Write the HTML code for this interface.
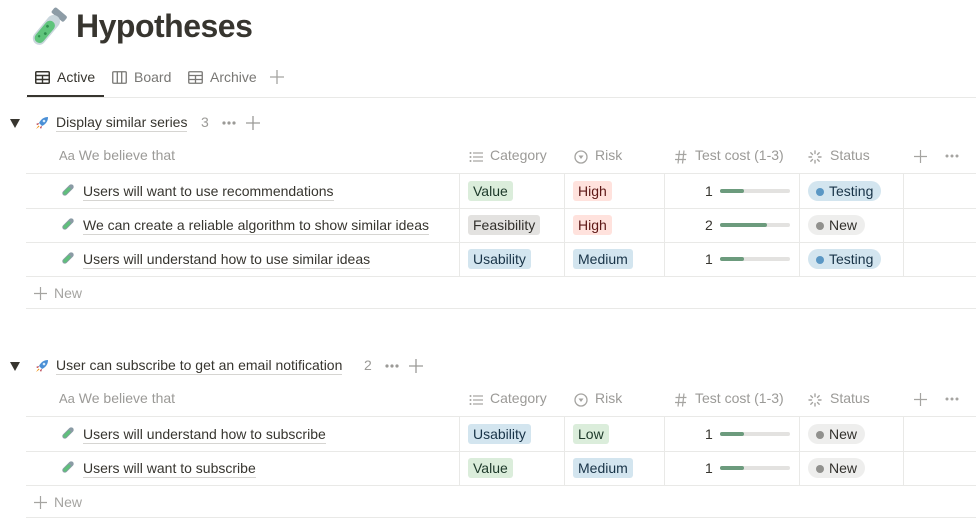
<!DOCTYPE html>
<html><head><meta charset="utf-8"><style>
*{margin:0;padding:0;box-sizing:border-box}
body{width:976px;height:519px;background:#fff;font-family:"Liberation Sans",sans-serif;color:#37352f;position:relative;overflow:hidden}
.a{position:absolute;white-space:nowrap}
.h1{left:76px;top:8px;font-size:32px;font-weight:bold;color:#37352f;letter-spacing:-0.5px}
.tab{top:69px;font-size:14px;color:#787774}
.sec{position:absolute;left:0;width:976px;height:180px}
.gh{top:8px;font-size:14px;color:#37352f}
.ul{border-bottom:1px solid #d6d5d2;padding-bottom:1px}
.ch{top:41px;font-size:14px;color:#9b9a97}
.hl{position:absolute;left:26px;right:0;height:1px;background:#e9e9e7}
.vl{position:absolute;width:1px;background:#e9e9e7}
.rt{font-size:14px;color:#37352f}
.pill{position:absolute;height:20px;line-height:20px;font-size:14px;padding:0 5px;border-radius:3px}
.g{background:#dbeddb;color:#1c3829}.gr{background:#e3e2e0;color:#32302c}.r{background:#ffe2dd;color:#5d1715}.b{background:#d3e5ef;color:#183347}
.st{border-radius:10px;padding:0 8px 0 8px}
.dot{display:inline-block;width:8px;height:8px;border-radius:50%;margin-right:5px;vertical-align:0}
.num{font-size:14px;color:#37352f}
.tr{position:absolute;left:720px;width:70px;height:4px;border-radius:2px;background:#e3e2e0}
.tr i{position:absolute;left:0;top:0;height:4px;border-radius:2px;background:#6c9b7d}
</style></head><body>
<svg class="a" style="left:28px;top:7px" width="40" height="42" viewBox="0 0 40 42"><g transform="rotate(40 20 21)"><rect x="12" y="0" width="16" height="7" rx="2" fill="#8d9ca6"/><rect x="13.5" y="6" width="13" height="35" rx="6.5" fill="#c9d6dc"/><rect x="15" y="13" width="10" height="26" rx="5" fill="#5fc47c"/><circle cx="18.5" cy="20" r="1.4" fill="#2f8f4e"/><circle cx="21.5" cy="27" r="1.4" fill="#2f8f4e"/><circle cx="18.5" cy="33" r="1.2" fill="#2f8f4e"/></g></svg>
<div class="a h1">Hypotheses</div>
<svg class="a" style="left:35px;top:71px" width="15" height="13" viewBox="0 0 15 13"><rect x="0.75" y="0.75" width="13.5" height="11.5" rx="1" fill="none" stroke="#37352f" stroke-width="1.5"/><path d="M1 4.5H14M1 8.5H14M7.5 4.5V12" stroke="#37352f" stroke-width="1.4"/></svg>
<div class="a tab" style="left:57px;color:#37352f">Active</div>
<svg class="a" style="left:112px;top:71px" width="15" height="13" viewBox="0 0 15 13"><rect x="0.75" y="0.75" width="13.5" height="11.5" rx="1" fill="none" stroke="#787774" stroke-width="1.3"/><path d="M5.3 1V12M9.7 1V12" stroke="#787774" stroke-width="1.3"/></svg>
<div class="a tab" style="left:134px">Board</div>
<svg class="a" style="left:188px;top:71px" width="15" height="13" viewBox="0 0 15 13"><rect x="0.75" y="0.75" width="13.5" height="11.5" rx="1" fill="none" stroke="#787774" stroke-width="1.3"/><path d="M1 4.5H14M1 8.5H14M7.5 4.5V12" stroke="#787774" stroke-width="1.3"/></svg>
<div class="a tab" style="left:210px">Archive</div>
<svg class="a" style="left:270px;top:70px" width="14" height="14" viewBox="0 0 14 14"><path d="M7 0v14M0 7h14" stroke="#a5a4a1" stroke-width="1.3"/></svg>
<div class="a" style="left:26px;right:0;top:97px;height:1px;background:#e9e9e7"></div>
<div class="a" style="left:27px;width:77px;top:95px;height:2px;background:#37352f"></div>

<!-- section 1 -->
<div class="sec" style="top:106px">
<svg class="a" style="left:10px;top:13px" width="10" height="9" viewBox="0 0 10 9"><path d="M0 0h10L5 9z" fill="#37352f"/></svg>
<svg class="a" style="left:35px;top:10px" width="14" height="14" viewBox="0 0 14 14"><path d="M13 1C9 1 6 3 4 7l3 3c4-2 6-5 6-9z" fill="#4a8fd6"/><circle cx="9" cy="5" r="1.3" fill="#d6ebfb"/><path d="M4 7L1 8l2 1zM7 10l-1 3-1-2z" fill="#b02a3a"/><path d="M3.5 9.5L1 13l3.5-2.5z" fill="#f29a1e"/></svg>
<div class="a gh" style="left:56px"><span class="ul">Display similar series</span></div>
<div class="a gh" style="left:201px;color:#9b9a97">3</div>
<svg class="a" style="left:222px;top:15px" width="14" height="4" viewBox="0 0 14 4"><g fill="#9b9a97"><circle cx="2" cy="2" r="1.6"/><circle cx="7" cy="2" r="1.6"/><circle cx="12" cy="2" r="1.6"/></g></svg>
<svg class="a" style="left:246px;top:10px" width="14" height="14" viewBox="0 0 14 14"><path d="M7 0v14M0 7h14" stroke="#9b9a97" stroke-width="1.3"/></svg>

<div class="a ch" style="left:59px"><span style="font-size:13px">Aa</span> We believe that</div>
<svg class="a" style="left:469px;top:45px" width="14" height="12" viewBox="0 0 14 12"><g fill="#a5a4a1"><circle cx="1.5" cy="2" r="1"/><circle cx="1.5" cy="6" r="1"/><circle cx="1.5" cy="10" r="1"/><rect x="4" y="1.4" width="10" height="1.2"/><rect x="4" y="5.4" width="10" height="1.2"/><rect x="4" y="9.4" width="10" height="1.2"/></g></svg>
<div class="a ch" style="left:490px">Category</div>
<svg class="a" style="left:574px;top:44px" width="14" height="14" viewBox="0 0 14 14"><circle cx="7" cy="7" r="6" fill="none" stroke="#a5a4a1" stroke-width="1.3"/><path d="M4.5 5.5h5L7 9z" fill="#a5a4a1"/></svg>
<div class="a ch" style="left:595px">Risk</div>
<svg class="a" style="left:675px;top:44px" width="12" height="14" viewBox="0 0 12 14"><path d="M4.5 0.5L3 13.5M9 0.5L7.5 13.5M0.5 4.5H11.5M0 9.5H11" stroke="#a5a4a1" stroke-width="1.2"/></svg>
<div class="a ch" style="left:695px">Test cost (1-3)</div>
<svg class="a" style="left:808px;top:44px" width="14" height="14" viewBox="0 0 14 14"><g stroke="#a5a4a1" stroke-width="1.4" stroke-linecap="round"><path d="M7 1v2.5M7 10.5V13M1 7h2.5M10.5 7H13M2.8 2.8l1.7 1.7M9.5 9.5l1.7 1.7M2.8 11.2l1.7-1.7M9.5 4.5l1.7-1.7"/></g></svg>
<div class="a ch" style="left:830px">Status</div>
<svg class="a" style="left:914px;top:44px" width="13" height="13" viewBox="0 0 13 13"><path d="M6.5 0v13M0 6.5h13" stroke="#a5a4a1" stroke-width="1.2"/></svg>
<svg class="a" style="left:945px;top:48px" width="14" height="4" viewBox="0 0 14 4"><g fill="#a5a4a1"><circle cx="2" cy="2" r="1.5"/><circle cx="7" cy="2" r="1.5"/><circle cx="12" cy="2" r="1.5"/></g></svg>

<div class="hl" style="top:67px"></div><div class="hl" style="top:102px"></div><div class="hl" style="top:136px"></div><div class="hl" style="top:170px"></div><div class="hl" style="top:202px"></div>
<div class="vl" style="left:459px;top:67px;height:103px"></div><div class="vl" style="left:564px;top:67px;height:103px"></div><div class="vl" style="left:664px;top:67px;height:103px"></div><div class="vl" style="left:799px;top:67px;height:103px"></div><div class="vl" style="left:903px;top:67px;height:103px"></div>

<svg class="a" style="left:61px;top:77px" width="14" height="14" viewBox="0 0 14 14"><g transform="rotate(45 7 7)"><rect x="4.5" y="0" width="5" height="14" rx="2.5" fill="#8a9ba5"/><rect x="5.3" y="4" width="3.4" height="9" rx="1.7" fill="#5fbf7b"/></g></svg>
<div class="a rt" style="left:83px;top:77px"><span class="ul">Users will want to use recommendations</span></div>
<svg class="a" style="left:61px;top:111px" width="14" height="14" viewBox="0 0 14 14"><g transform="rotate(45 7 7)"><rect x="4.5" y="0" width="5" height="14" rx="2.5" fill="#8a9ba5"/><rect x="5.3" y="4" width="3.4" height="9" rx="1.7" fill="#5fbf7b"/></g></svg>
<div class="a rt" style="left:83px;top:111px"><span class="ul">We can create a reliable algorithm to show similar ideas</span></div>
<svg class="a" style="left:61px;top:145px" width="14" height="14" viewBox="0 0 14 14"><g transform="rotate(45 7 7)"><rect x="4.5" y="0" width="5" height="14" rx="2.5" fill="#8a9ba5"/><rect x="5.3" y="4" width="3.4" height="9" rx="1.7" fill="#5fbf7b"/></g></svg>
<div class="a rt" style="left:83px;top:145px"><span class="ul">Users will understand how to use similar ideas</span></div>

<div class="pill g" style="left:468px;top:75px">Value</div>
<div class="pill gr" style="left:468px;top:109px">Feasibility</div>
<div class="pill b" style="left:468px;top:143px">Usability</div>
<div class="pill r" style="left:573px;top:75px">High</div>
<div class="pill r" style="left:573px;top:109px">High</div>
<div class="pill b" style="left:573px;top:143px">Medium</div>
<div class="a num" style="left:705px;top:77px">1</div><div class="tr" style="top:83px"><i style="width:24px"></i></div>
<div class="a num" style="left:705px;top:111px">2</div><div class="tr" style="top:117px"><i style="width:47px"></i></div>
<div class="a num" style="left:705px;top:145px">1</div><div class="tr" style="top:151px"><i style="width:24px"></i></div>
<div class="pill b st" style="left:808px;top:75px"><span class="dot" style="background:#5a97c4"></span>Testing</div>
<div class="pill st" style="left:808px;top:109px;background:#eeeeed;color:#32302c"><span class="dot" style="background:#91918e"></span>New</div>
<div class="pill b st" style="left:808px;top:143px"><span class="dot" style="background:#5a97c4"></span>Testing</div>
<svg class="a" style="left:34px;top:181px" width="13" height="13" viewBox="0 0 13 13"><path d="M6.5 0v13M0 6.5h13" stroke="#a5a4a1" stroke-width="1.2"/></svg>
<div class="a ch" style="left:54px;top:179px;color:#a5a4a1">New</div>
</div>

<!-- section 2 -->
<div class="sec" style="top:349px">
<svg class="a" style="left:10px;top:13px" width="10" height="9" viewBox="0 0 10 9"><path d="M0 0h10L5 9z" fill="#37352f"/></svg>
<svg class="a" style="left:35px;top:10px" width="14" height="14" viewBox="0 0 14 14"><path d="M13 1C9 1 6 3 4 7l3 3c4-2 6-5 6-9z" fill="#4a8fd6"/><circle cx="9" cy="5" r="1.3" fill="#d6ebfb"/><path d="M4 7L1 8l2 1zM7 10l-1 3-1-2z" fill="#b02a3a"/><path d="M3.5 9.5L1 13l3.5-2.5z" fill="#f29a1e"/></svg>
<div class="a gh" style="left:56px"><span class="ul">User can subscribe to get an email notification</span></div>
<div class="a gh" style="left:364px;color:#9b9a97">2</div>
<svg class="a" style="left:385px;top:15px" width="14" height="4" viewBox="0 0 14 4"><g fill="#9b9a97"><circle cx="2" cy="2" r="1.6"/><circle cx="7" cy="2" r="1.6"/><circle cx="12" cy="2" r="1.6"/></g></svg>
<svg class="a" style="left:409px;top:10px" width="14" height="14" viewBox="0 0 14 14"><path d="M7 0v14M0 7h14" stroke="#9b9a97" stroke-width="1.3"/></svg>

<div class="a ch" style="left:59px"><span style="font-size:13px">Aa</span> We believe that</div>
<svg class="a" style="left:469px;top:45px" width="14" height="12" viewBox="0 0 14 12"><g fill="#a5a4a1"><circle cx="1.5" cy="2" r="1"/><circle cx="1.5" cy="6" r="1"/><circle cx="1.5" cy="10" r="1"/><rect x="4" y="1.4" width="10" height="1.2"/><rect x="4" y="5.4" width="10" height="1.2"/><rect x="4" y="9.4" width="10" height="1.2"/></g></svg>
<div class="a ch" style="left:490px">Category</div>
<svg class="a" style="left:574px;top:44px" width="14" height="14" viewBox="0 0 14 14"><circle cx="7" cy="7" r="6" fill="none" stroke="#a5a4a1" stroke-width="1.3"/><path d="M4.5 5.5h5L7 9z" fill="#a5a4a1"/></svg>
<div class="a ch" style="left:595px">Risk</div>
<svg class="a" style="left:675px;top:44px" width="12" height="14" viewBox="0 0 12 14"><path d="M4.5 0.5L3 13.5M9 0.5L7.5 13.5M0.5 4.5H11.5M0 9.5H11" stroke="#a5a4a1" stroke-width="1.2"/></svg>
<div class="a ch" style="left:695px">Test cost (1-3)</div>
<svg class="a" style="left:808px;top:44px" width="14" height="14" viewBox="0 0 14 14"><g stroke="#a5a4a1" stroke-width="1.4" stroke-linecap="round"><path d="M7 1v2.5M7 10.5V13M1 7h2.5M10.5 7H13M2.8 2.8l1.7 1.7M9.5 9.5l1.7 1.7M2.8 11.2l1.7-1.7M9.5 4.5l1.7-1.7"/></g></svg>
<div class="a ch" style="left:830px">Status</div>
<svg class="a" style="left:914px;top:44px" width="13" height="13" viewBox="0 0 13 13"><path d="M6.5 0v13M0 6.5h13" stroke="#a5a4a1" stroke-width="1.2"/></svg>
<svg class="a" style="left:945px;top:48px" width="14" height="4" viewBox="0 0 14 4"><g fill="#a5a4a1"><circle cx="2" cy="2" r="1.5"/><circle cx="7" cy="2" r="1.5"/><circle cx="12" cy="2" r="1.5"/></g></svg>

<div class="hl" style="top:67px"></div><div class="hl" style="top:102px"></div><div class="hl" style="top:136px"></div><div class="hl" style="top:168px"></div>
<div class="vl" style="left:459px;top:67px;height:69px"></div><div class="vl" style="left:564px;top:67px;height:69px"></div><div class="vl" style="left:664px;top:67px;height:69px"></div><div class="vl" style="left:799px;top:67px;height:69px"></div><div class="vl" style="left:903px;top:67px;height:69px"></div>

<svg class="a" style="left:61px;top:77px" width="14" height="14" viewBox="0 0 14 14"><g transform="rotate(45 7 7)"><rect x="4.5" y="0" width="5" height="14" rx="2.5" fill="#8a9ba5"/><rect x="5.3" y="4" width="3.4" height="9" rx="1.7" fill="#5fbf7b"/></g></svg>
<div class="a rt" style="left:83px;top:77px"><span class="ul">Users will understand how to subscribe</span></div>
<svg class="a" style="left:61px;top:111px" width="14" height="14" viewBox="0 0 14 14"><g transform="rotate(45 7 7)"><rect x="4.5" y="0" width="5" height="14" rx="2.5" fill="#8a9ba5"/><rect x="5.3" y="4" width="3.4" height="9" rx="1.7" fill="#5fbf7b"/></g></svg>
<div class="a rt" style="left:83px;top:111px"><span class="ul">Users will want to subscribe</span></div>

<div class="pill b" style="left:468px;top:75px">Usability</div>
<div class="pill g" style="left:468px;top:109px">Value</div>
<div class="pill g" style="left:573px;top:75px">Low</div>
<div class="pill b" style="left:573px;top:109px">Medium</div>
<div class="a num" style="left:705px;top:77px">1</div><div class="tr" style="top:83px"><i style="width:24px"></i></div>
<div class="a num" style="left:705px;top:111px">1</div><div class="tr" style="top:117px"><i style="width:24px"></i></div>
<div class="pill st" style="left:808px;top:75px;background:#eeeeed;color:#32302c"><span class="dot" style="background:#91918e"></span>New</div>
<div class="pill st" style="left:808px;top:109px;background:#eeeeed;color:#32302c"><span class="dot" style="background:#91918e"></span>New</div>
<svg class="a" style="left:34px;top:147px" width="13" height="13" viewBox="0 0 13 13"><path d="M6.5 0v13M0 6.5h13" stroke="#a5a4a1" stroke-width="1.2"/></svg>
<div class="a ch" style="left:54px;top:145px;color:#a5a4a1">New</div>
</div>
</body></html>
